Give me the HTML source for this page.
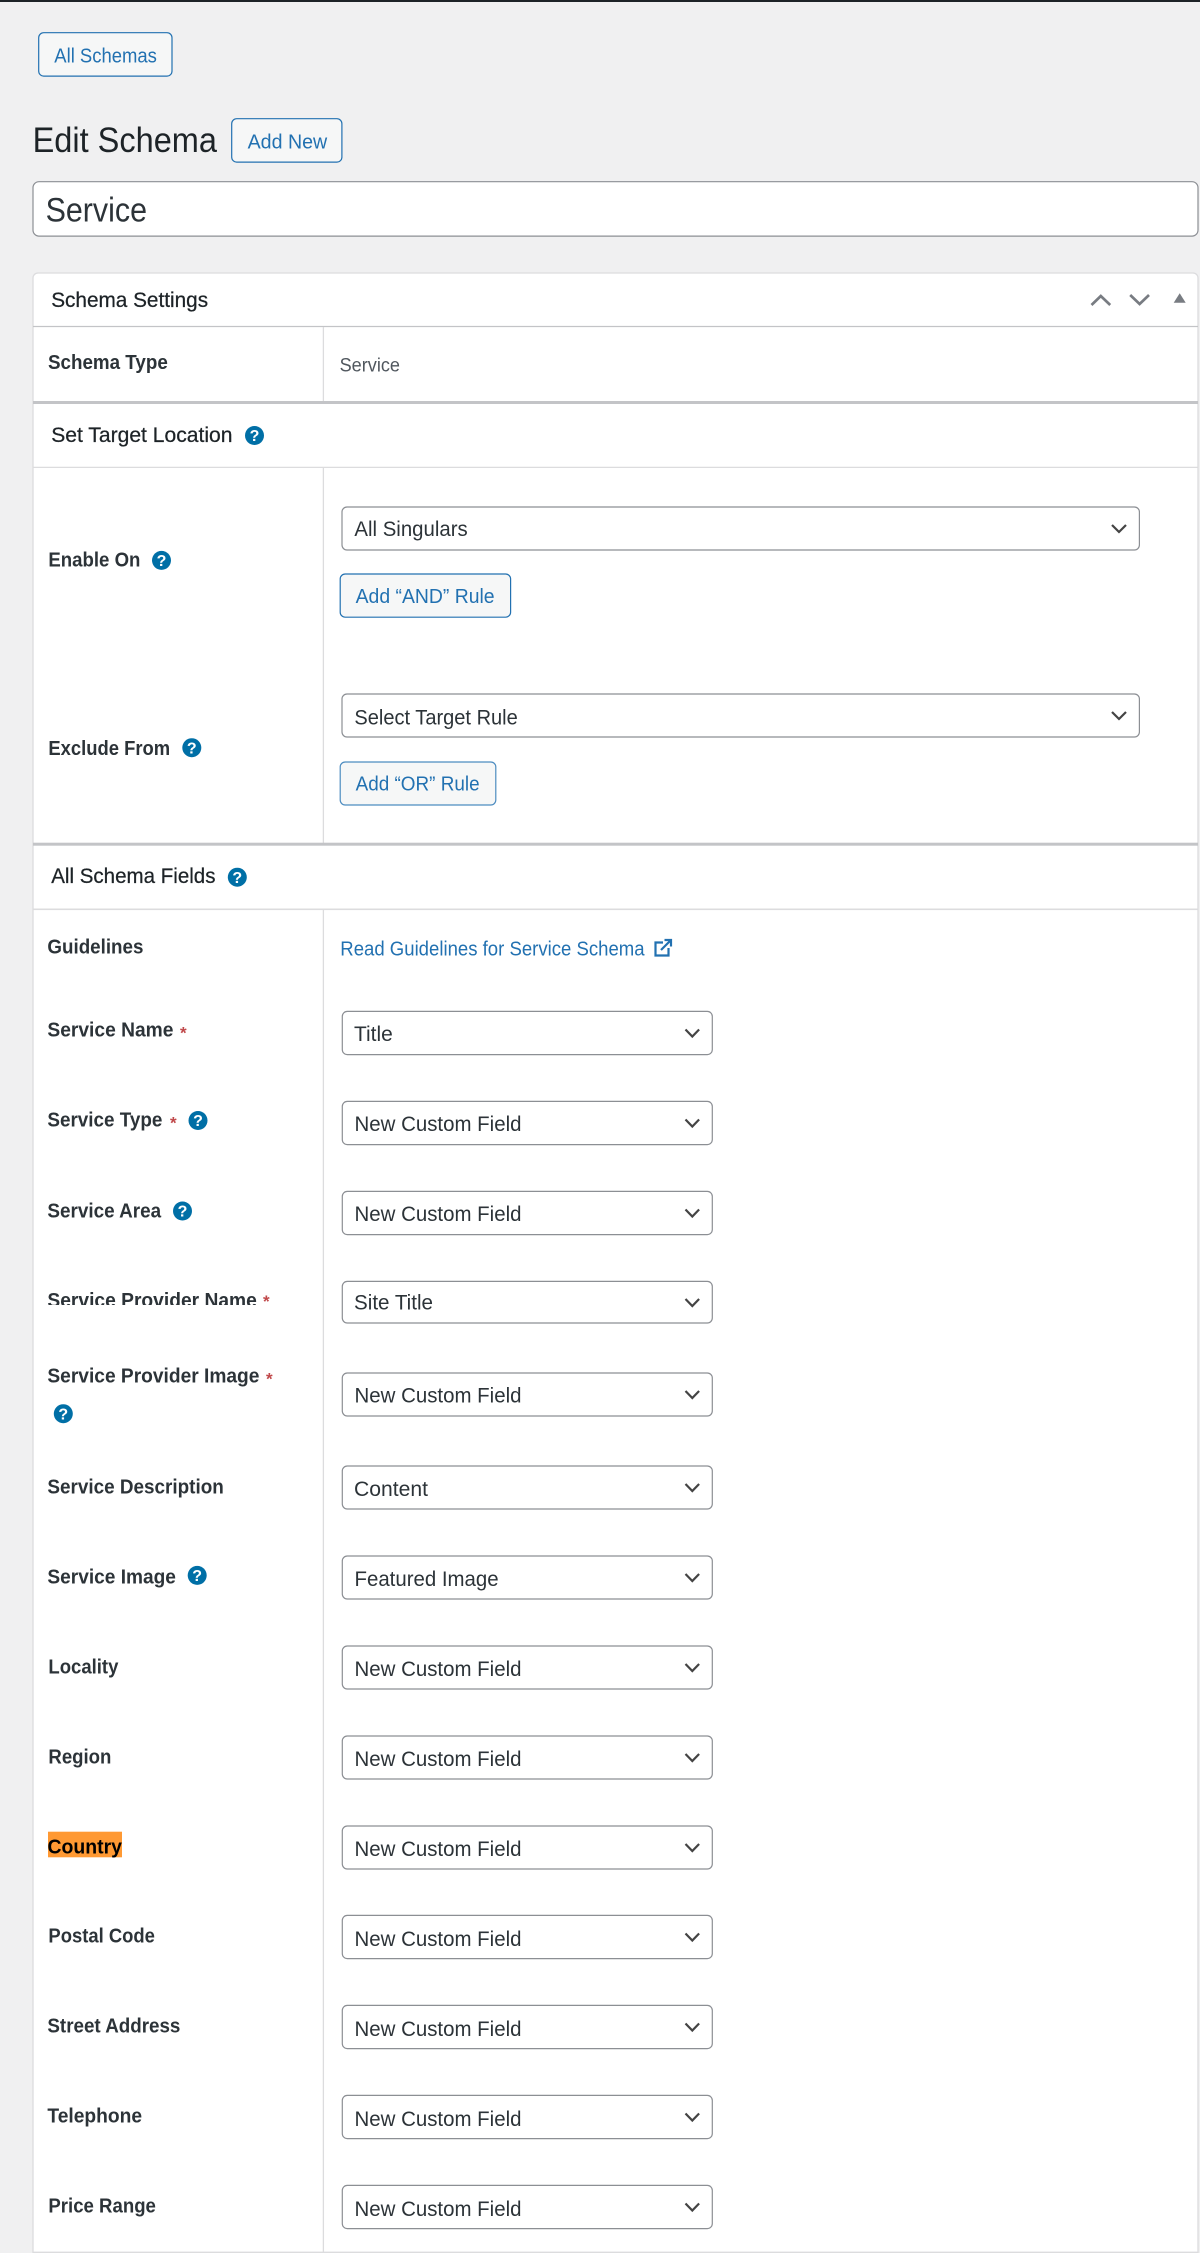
<!DOCTYPE html>
<html lang="en">
<head>
<meta charset="utf-8">
<title>Edit Schema</title>
<style>
html,body{margin:0;padding:0;background:#f0f0f1;}
body{width:1200px;height:2253px;overflow:hidden;}
svg{display:block;filter:blur(.3px);}
text{font-family:"Liberation Sans",sans-serif;}
.l{font-size:20px;font-weight:700;fill:#2c3338;transform:translateX(-.6px);}
.v{font-size:21.5px;fill:#2c3338;transform:translateY(-.5px);}
.b{font-size:20px;fill:#2271b1;transform:translateX(-.4px);}
.h{font-size:21.5px;fill:#1d2327;stroke:#1d2327;stroke-width:.25px;transform:translateX(-.5px);}
.s{font-size:17px;font-weight:700;fill:#c0484a;}
.q{font-size:16px;font-weight:700;fill:#fff;text-anchor:middle;}
.sel{fill:#fff;stroke:#8c8f94;stroke-width:1.2;}
.btn{fill:#f6f7f7;stroke:#2271b1;stroke-width:1.2;}
.chev{fill:none;stroke:#444;stroke-width:2.2;}
.ln{stroke:#dcdcde;stroke-width:1.3;}
.hc{fill:#006fa6;}
</style>
</head>
<body>
<svg xmlns="http://www.w3.org/2000/svg" width="1200" height="2253" viewBox="0 0 1200 2253">
<defs><clipPath id="c"><rect x="0" y="1270" width="330" height="35"/></clipPath></defs>
<rect x="0" y="0" width="1200" height="2253" fill="#f0f0f1"/>
<rect x="0" y="0" width="1200" height="2" fill="#1d2327"/>

<!-- top -->
<rect class="btn" x="38.7" y="32.7" width="133.3" height="43.4" rx="5"/>
<text class="b" x="54.7" y="62.3" textLength="102.6" lengthAdjust="spacingAndGlyphs">All Schemas</text>
<text x="32.6" y="152" font-size="35" fill="#1d2327" textLength="184.4" lengthAdjust="spacingAndGlyphs">Edit Schema</text>
<rect class="btn" x="231.7" y="118.7" width="110.2" height="43.4" rx="5"/>
<text class="b" x="248" y="148.3" textLength="79.6" lengthAdjust="spacingAndGlyphs">Add New</text>
<rect x="33" y="181.7" width="1165" height="54.4" rx="6" fill="#fff" stroke="#8c8f94" stroke-width="1.2"/>
<text x="45.6" y="221.6" font-size="34" fill="#2c3338" textLength="101.4" lengthAdjust="spacingAndGlyphs">Service</text>

<!-- postbox -->
<path d="M33 2253V278a5 5 0 0 1 5-5H1193a5 5 0 0 1 5 5V2253" fill="#fff" stroke="#dcdcde" stroke-width="1.3"/>
<line x1="33" y1="326.5" x2="1198" y2="326.5" stroke="#c3c4c7" stroke-width="1.3"/>
<text class="h" x="51.7" y="307" textLength="156.9" lengthAdjust="spacingAndGlyphs">Schema Settings</text>
<path d="M1091.5 305L1100.8 296L1110.2 305" fill="none" stroke="#787c82" stroke-width="2.7"/>
<path d="M1130.2 295L1139.6 304L1149 295" fill="none" stroke="#787c82" stroke-width="2.7"/>
<path d="M1173.7 302.7L1179.7 293.3L1185.7 302.7Z" fill="#787c82"/>

<line class="ln" x1="323.4" y1="327" x2="323.4" y2="401"/>
<text class="l" x="48.6" y="369" textLength="119.8" lengthAdjust="spacingAndGlyphs">Schema Type</text>
<text x="339.6" y="371.7" font-size="19.5" fill="#50575e" textLength="60.4" lengthAdjust="spacingAndGlyphs">Service</text>
<rect x="33" y="401" width="1165" height="3" fill="#c3c4c7"/>

<text class="h" x="51.7" y="442" textLength="181.3" lengthAdjust="spacingAndGlyphs">Set Target Location</text>
<circle class="hc" cx="254.5" cy="435.5" r="9.5"/><text class="q" x="254.5" y="441.2">?</text>
<line class="ln" x1="33" y1="467.4" x2="1198" y2="467.4"/>
<line class="ln" x1="323.4" y1="468" x2="323.4" y2="843"/>

<text class="l" x="49" y="566.7" textLength="92" lengthAdjust="spacingAndGlyphs">Enable On</text>
<circle class="hc" cx="161.5" cy="560.4" r="9.5"/><text class="q" x="161.5" y="566.1">?</text>
<rect class="sel" x="342" y="507" width="797.4" height="43" rx="5"/>
<text class="v" x="354.4" y="536.7" textLength="113.3" lengthAdjust="spacingAndGlyphs">All Singulars</text>
<path class="chev" d="M1112 525L1119 532L1126 525"/>
<rect class="btn" x="340.2" y="574" width="170.4" height="43.2" rx="5"/>
<text class="b" x="356" y="603" textLength="139" lengthAdjust="spacingAndGlyphs">Add “AND” Rule</text>

<text class="l" x="49" y="755" textLength="121.7" lengthAdjust="spacingAndGlyphs">Exclude From</text>
<circle class="hc" cx="191.8" cy="747.7" r="9.5"/><text class="q" x="191.8" y="753.4">?</text>
<rect class="sel" x="342" y="694" width="797.4" height="43" rx="5"/>
<text class="v" x="354.4" y="725" textLength="163.4" lengthAdjust="spacingAndGlyphs">Select Target Rule</text>
<path class="chev" d="M1112 712L1119 719L1126 712"/>
<rect class="btn" x="340.2" y="762" width="155.6" height="43" rx="5" stroke-opacity=".8"/>
<text class="b" x="356" y="790.7" textLength="124" lengthAdjust="spacingAndGlyphs">Add “OR” Rule</text>

<rect x="33" y="842.7" width="1165" height="3" fill="#c3c4c7"/>
<text class="h" x="51.7" y="883" textLength="164.3" lengthAdjust="spacingAndGlyphs">All Schema Fields</text>
<circle class="hc" cx="237.3" cy="877.2" r="9.5"/><text class="q" x="237.3" y="882.9">?</text>
<rect x="33" y="908.5" width="1165" height="1.6" fill="#dcdcde"/>
<line class="ln" x1="323.4" y1="910" x2="323.4" y2="2252"/>

<!-- Guidelines -->
<text class="l" x="48" y="953.3" textLength="96" lengthAdjust="spacingAndGlyphs">Guidelines</text>
<text class="b" x="340.7" y="955.7" textLength="304.3" lengthAdjust="spacingAndGlyphs">Read Guidelines for Service Schema</text>
<path d="M663 942.5H655.5V955.5H668.5V948" fill="none" stroke="#2271b1" stroke-width="2.2"/>
<path d="M661 950L670 941M664.5 940H671V946.5" fill="none" stroke="#2271b1" stroke-width="2.2"/>

<!-- Service Name -->
<text class="l" x="48" y="1036.7" textLength="126" lengthAdjust="spacingAndGlyphs">Service Name</text>
<text class="s" x="180" y="1038.7">*</text>
<rect class="sel" x="342.3" y="1011.4" width="370" height="43.2" rx="5"/>
<text class="v" x="354" y="1041.7" textLength="38.8" lengthAdjust="spacingAndGlyphs">Title</text>
<path class="chev" d="M685.5 1029.5L692.3 1036.5L699.1 1029.5"/>

<!-- Service Type -->
<text class="l" x="48" y="1126.7" textLength="115" lengthAdjust="spacingAndGlyphs">Service Type</text>
<text class="s" x="170" y="1128.7">*</text>
<circle class="hc" cx="198" cy="1120.5" r="9.5"/><text class="q" x="198" y="1126.2">?</text>
<rect class="sel" x="342.3" y="1101.4" width="370" height="43.2" rx="5"/>
<text class="v" x="354.5" y="1131.7" textLength="167" lengthAdjust="spacingAndGlyphs">New Custom Field</text>
<path class="chev" d="M685.5 1119.5L692.3 1126.5L699.1 1119.5"/>

<!-- Service Area -->
<text class="l" x="48" y="1217.7" textLength="113.7" lengthAdjust="spacingAndGlyphs">Service Area</text>
<circle class="hc" cx="182.5" cy="1211" r="9.5"/><text class="q" x="182.5" y="1216.7">?</text>
<rect class="sel" x="342.3" y="1191.4" width="370" height="43.2" rx="5"/>
<text class="v" x="354.5" y="1221.7" textLength="167" lengthAdjust="spacingAndGlyphs">New Custom Field</text>
<path class="chev" d="M685.5 1209.5L692.3 1216.5L699.1 1209.5"/>

<!-- Service Provider Name (clipped in reference) -->
<g clip-path="url(#c)">
<text class="l" x="48" y="1307" textLength="209.4" lengthAdjust="spacingAndGlyphs">Service Provider Name</text>
<text class="s" x="263" y="1307">*</text>
</g>
<rect class="sel" x="342.3" y="1281.4" width="370" height="41.6" rx="5"/>
<text class="v" x="354" y="1310" font-size="20" textLength="79" lengthAdjust="spacingAndGlyphs">Site Title</text>
<path class="chev" d="M685.5 1299L692.3 1306L699.1 1299"/>

<!-- Service Provider Image -->
<text class="l" x="48" y="1382.3" textLength="212" lengthAdjust="spacingAndGlyphs">Service Provider Image</text>
<text class="s" x="266" y="1384.3">*</text>
<circle class="hc" cx="63.3" cy="1413.7" r="9.5"/><text class="q" x="63.3" y="1419.4">?</text>
<rect class="sel" x="342.3" y="1373" width="370" height="43" rx="5"/>
<text class="v" x="354.5" y="1403" textLength="167" lengthAdjust="spacingAndGlyphs">New Custom Field</text>
<path class="chev" d="M685.5 1391L692.3 1398L699.1 1391"/>

<!-- Service Description -->
<text class="l" x="48" y="1493.3" textLength="176.4" lengthAdjust="spacingAndGlyphs">Service Description</text>
<rect class="sel" x="342.3" y="1466" width="370" height="43" rx="5"/>
<text class="v" x="354" y="1496.7" textLength="74" lengthAdjust="spacingAndGlyphs">Content</text>
<path class="chev" d="M685.5 1484L692.3 1491L699.1 1484"/>

<!-- Service Image -->
<text class="l" x="48" y="1583.3" textLength="128.5" lengthAdjust="spacingAndGlyphs">Service Image</text>
<circle class="hc" cx="197.2" cy="1575.4" r="9.5"/><text class="q" x="197.2" y="1581.1">?</text>
<rect class="sel" x="342.3" y="1556" width="370" height="43" rx="5"/>
<text class="v" x="354.5" y="1586.7" textLength="144.1" lengthAdjust="spacingAndGlyphs">Featured Image</text>
<path class="chev" d="M685.5 1574L692.3 1581L699.1 1574"/>

<!-- Locality -->
<text class="l" x="49" y="1673.3" textLength="70" lengthAdjust="spacingAndGlyphs">Locality</text>
<rect class="sel" x="342.3" y="1646" width="370" height="43" rx="5"/>
<text class="v" x="354.5" y="1676.7" textLength="167" lengthAdjust="spacingAndGlyphs">New Custom Field</text>
<path class="chev" d="M685.5 1664L692.3 1671L699.1 1664"/>

<!-- Region -->
<text class="l" x="49" y="1763.3" textLength="63" lengthAdjust="spacingAndGlyphs">Region</text>
<rect class="sel" x="342.3" y="1736" width="370" height="43" rx="5"/>
<text class="v" x="354.5" y="1766.7" textLength="167" lengthAdjust="spacingAndGlyphs">New Custom Field</text>
<path class="chev" d="M685.5 1754L692.3 1761L699.1 1754"/>

<!-- Country -->
<rect x="48" y="1831.7" width="74" height="25.6" fill="#ff9933"/>
<text x="47.5" y="1853.3" font-size="20" font-weight="700" fill="#000" textLength="74.5" lengthAdjust="spacingAndGlyphs">Country</text>
<rect class="sel" x="342.3" y="1826" width="370" height="43" rx="5"/>
<text class="v" x="354.5" y="1856.7" textLength="167" lengthAdjust="spacingAndGlyphs">New Custom Field</text>
<path class="chev" d="M685.5 1844L692.3 1851L699.1 1844"/>

<!-- Postal Code -->
<text class="l" x="49" y="1942.7" textLength="106.5" lengthAdjust="spacingAndGlyphs">Postal Code</text>
<rect class="sel" x="342.3" y="1915.4" width="370" height="43.2" rx="5"/>
<text class="v" x="354.5" y="1946.4" textLength="167" lengthAdjust="spacingAndGlyphs">New Custom Field</text>
<path class="chev" d="M685.5 1933.5L692.3 1940.5L699.1 1933.5"/>

<!-- Street Address -->
<text class="l" x="48" y="2032.7" textLength="133" lengthAdjust="spacingAndGlyphs">Street Address</text>
<rect class="sel" x="342.3" y="2005.4" width="370" height="43.2" rx="5"/>
<text class="v" x="354.5" y="2036.4" textLength="167" lengthAdjust="spacingAndGlyphs">New Custom Field</text>
<path class="chev" d="M685.5 2023.5L692.3 2030.5L699.1 2023.5"/>

<!-- Telephone -->
<text class="l" x="48" y="2122.7" textLength="94.6" lengthAdjust="spacingAndGlyphs">Telephone</text>
<rect class="sel" x="342.3" y="2095.4" width="370" height="43.2" rx="5"/>
<text class="v" x="354.5" y="2126.4" textLength="167" lengthAdjust="spacingAndGlyphs">New Custom Field</text>
<path class="chev" d="M685.5 2113.5L692.3 2120.5L699.1 2113.5"/>

<!-- Price Range -->
<text class="l" x="49" y="2212.7" textLength="107.5" lengthAdjust="spacingAndGlyphs">Price Range</text>
<rect class="sel" x="342.3" y="2185.4" width="370" height="43.2" rx="5"/>
<text class="v" x="354.5" y="2216.4" textLength="167" lengthAdjust="spacingAndGlyphs">New Custom Field</text>
<path class="chev" d="M685.5 2203.5L692.3 2210.5L699.1 2203.5"/>

<rect x="33" y="2251.6" width="1165" height="1.4" fill="#dcdcde"/>
</svg>
</body>
</html>
